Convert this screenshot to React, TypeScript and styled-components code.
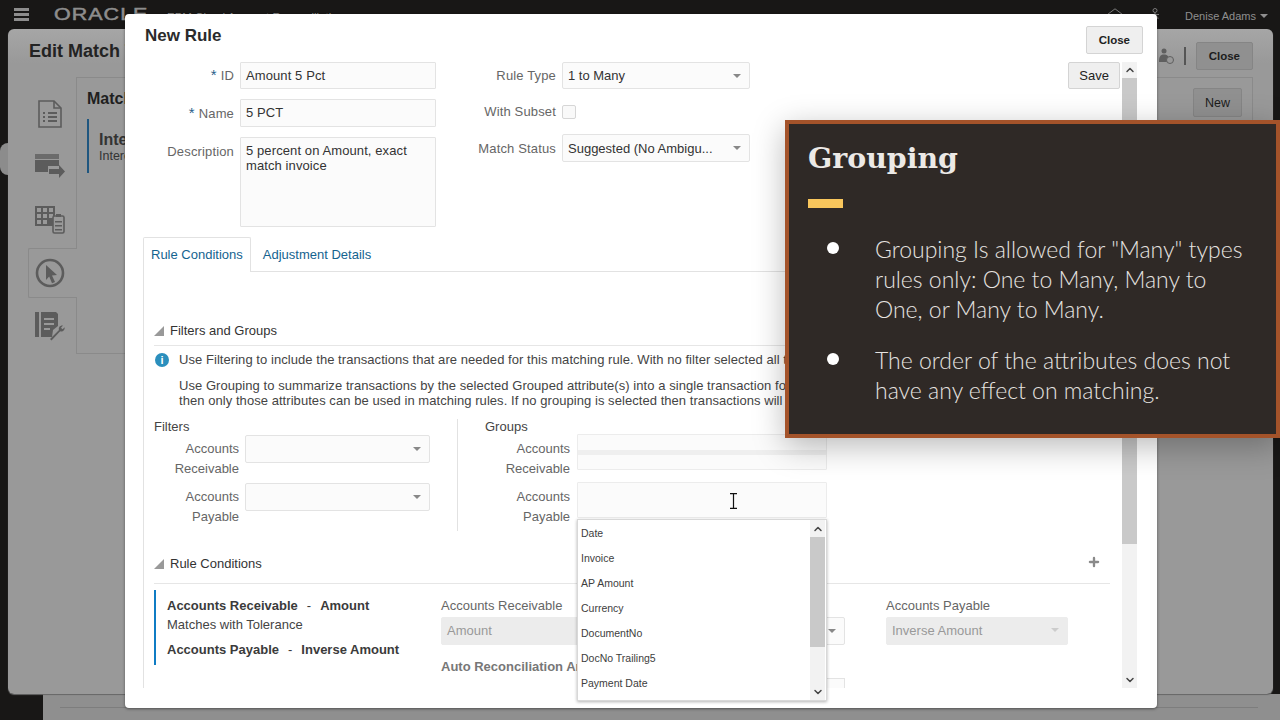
import React from 'react';
import styled, { createGlobalStyle } from 'styled-components';
import { ChevronDown, ChevronUp, Plus } from 'lucide-react';

const GlobalStyle = createGlobalStyle`
  html, body {
    margin: 0;
    padding: 0;
    background: #181716;
  }
  * {
    box-sizing: border-box;
  }
`;

const Screen = styled.div`
  position: relative;
  width: 1280px;
  height: 720px;
  overflow: hidden;
  background: #181716;
  font-family: 'Liberation Sans', Arial, sans-serif;
  font-size: 13px;
  color: #333;
`;

/* ---------- dimmed page behind the dialog ---------- */

const TopBar = styled.div`
  height: 29px;
  display: flex;
  align-items: center;
  padding: 0 12px 0 14px;
  color: #8d8d8d;
`;

const Burger = styled.div`
  width: 15px;
  height: 13px;
  border-top: 3px solid #8d8d8d;
  border-bottom: 3px solid #8d8d8d;
  display: flex;
  align-items: center;
  &::before {
    content: '';
    display: block;
    width: 100%;
    height: 3px;
    background: #8d8d8d;
  }
`;

const Logo = styled.div`
  margin-left: 25px;
  width: 113px;
  font-size: 16.5px;
  letter-spacing: 0.8px;
  -webkit-text-stroke: 0.5px #8d8d8d;
  transform: scaleX(1.3);
  transform-origin: left center;
`;

const AppName = styled.div`
  font-size: 11.5px;
  margin-top: 4px;
  white-space: nowrap;
`;

const UserArea = styled.div`
  margin-left: auto;
  display: flex;
  align-items: flex-start;
  height: 29px;
  padding-top: 8px;
`;

const HomeSlot = styled.div`
  margin-right: 27px;
  display: flex;
`;

const UserName = styled.div`
  font-size: 11px;
  margin: 2px 0 0 25px;
  display: flex;
  align-items: center;
  gap: 4px;
  color: #8f8f8f;
`;

const Caret = styled.span<{ $color?: string; $size?: number }>`
  display: block;
  width: 0;
  height: 0;
  border-left: ${(p) => p.$size ?? 4}px solid transparent;
  border-right: ${(p) => p.$size ?? 4}px solid transparent;
  border-top: ${(p) => p.$size ?? 4}px solid ${(p) => p.$color ?? '#888'};
`;

const Panel = styled.div`
  position: relative;
  margin: 0 7px 0 8px;
  height: 665px;
  border-radius: 6px;
  background: linear-gradient(#a6a6a6, #999 34px);
  box-shadow: 0 1px 1px #666;
`;

const PanelHead = styled.div`
  height: 48px;
  display: flex;
  align-items: center;
  padding: 0 20px 0 21px;
`;

const PanelTitle = styled.h1`
  margin: -4px 0 0;
  white-space: nowrap;
  font-size: 18px;
  color: #232323;
`;

const PanelActions = styled.div`
  margin: 5px 0 0 auto;
  display: flex;
  align-items: center;
  gap: 10px;
`;

const Separator = styled.div`
  width: 2px;
  height: 18px;
  background: #555;
`;

const DimButton = styled.div<{ $height?: number; $bold?: boolean }>`
  height: ${(p) => p.$height ?? 28}px;
  padding: 0 ${(p) => (p.$bold ? 12 : 11)}px;
  display: flex;
  align-items: center;
  border: 1px solid #858585;
  border-radius: 2px;
  background: #909090;
  color: #1c1c1c;
  font-size: ${(p) => (p.$bold ? 11.5 : 12.5)}px;
  font-weight: ${(p) => (p.$bold ? 'bold' : 'normal')};
`;

const PanelBody = styled.div`
  display: flex;
  padding-left: 20px;
`;

const SideTabs = styled.div`
  width: 48px;
  padding-top: 10px;
  display: flex;
  flex-direction: column;
`;

const SideTab = styled.div<{ $active?: boolean }>`
  position: relative;
  z-index: 1;
  height: ${(p) => (p.$active ? 50 : 53)}px;
  margin: ${(p) => (p.$active ? '2px -1px 1px 0' : '0')};
  padding-right: ${(p) => (p.$active ? 6 : 4)}px;
  display: flex;
  align-items: center;
  justify-content: center;
  color: #5c5c5c;
  background: ${(p) => (p.$active ? '#999' : 'transparent')};
  border: ${(p) => (p.$active ? '1px solid #8a8a8a' : 'none')};
  border-right: none;
  border-radius: 2px 0 0 2px;
`;

const ContentBox = styled.div`
  width: 1177px;
  height: 277px;
  padding: 10px 10px 0;
  border: 1px solid #8a8a8a;
`;

const ContentHead = styled.div`
  display: flex;
  align-items: flex-start;
  justify-content: space-between;
`;

const ContentTitle = styled.div`
  margin-top: 2px;
  white-space: nowrap;
  font-size: 16px;
  font-weight: bold;
  color: #1f1f1f;
`;

const MatchItem = styled.div`
  margin-top: 2px;
  padding: 12px 0 0 10px;
  height: 54px;
  white-space: nowrap;
  font-size: 12.5px;
  border-left: 2px solid #1f567f;
  color: #333;
`;

const MatchName = styled.div`
  font-size: 16px;
  font-weight: bold;
  line-height: 18px;
`;

const Handle = styled.div`
  position: absolute;
  left: -8px;
  top: 114px;
  width: 8px;
  height: 32px;
  border-radius: 16px 0 0 16px;
  background: #8c8c8c;
`;

const BottomStrip = styled.div`
  height: 26px;
  margin-left: 43px;
  padding: 13px 22px 0 17px;
  background: #8f8f8f;
  &::after {
    content: '';
    display: block;
    height: 1px;
    background: #7d7d7d;
  }
`;

/* ---------- dialog ---------- */

const Dialog = styled.div`
  position: absolute;
  left: 125px;
  top: 14px;
  width: 1032px;
  height: 694px;
  padding: 12px 0 0 18px;
  background: #fff;
  border-radius: 4px;
  box-shadow: 0 1px 3px rgba(0, 0, 0, 0.45);
`;

const DialogHead = styled.div`
  height: 36px;
  display: flex;
  align-items: flex-start;
  justify-content: space-between;
  padding-right: 14px;
`;

const DialogTitle = styled.h2`
  margin: 0 0 0 2px;
  font-size: 17px;
  line-height: 19px;
  color: #2b2b2b;
`;

const Button = styled.div<{ $bold?: boolean }>`
  height: ${(p) => (p.$bold ? 28 : 27)}px;
  padding: 0 ${(p) => (p.$bold ? 12 : 10)}px;
  display: flex;
  align-items: center;
  background: #efefef;
  border: 1px solid #d4d4d4;
  border-radius: 2px;
  font-size: ${(p) => (p.$bold ? 11.5 : 13)}px;
  font-weight: ${(p) => (p.$bold ? 'bold' : 'normal')};
  color: #222;
`;

const DialogBody = styled.div`
  display: flex;
  gap: 2px;
`;

const Main = styled.div`
  width: 977px;
`;

const TopForm = styled.div`
  height: 165px;
  display: flex;
  align-items: flex-start;
`;

const FormColumn = styled.div<{ $rows: string; $label: number; $field: number; $left?: number; $rowGap?: number }>`
  display: grid;
  grid-template-columns: ${(p) => p.$label}px ${(p) => p.$field}px;
  grid-template-rows: ${(p) => p.$rows};
  column-gap: 6px;
  row-gap: ${(p) => p.$rowGap ?? 0}px;
  margin-left: ${(p) => p.$left ?? 0}px;
`;

const FieldLabel = styled.label<{ $top?: boolean }>`
  align-self: ${(p) => (p.$top ? 'start' : 'center')};
  padding-top: ${(p) => (p.$top ? 7 : 0)}px;
  text-align: right;
  letter-spacing: 0.15px;
  color: #666;
  white-space: nowrap;
`;

const Required = styled.span`
  color: #2a5f8a;
  font-size: 15px;
  line-height: 10px;
  margin-right: 4px;
`;

const TextBox = styled.div`
  height: 100%;
  padding: 5px;
  background: #fbfbfb;
  border: 1px solid #e3e3e3;
  border-radius: 1px;
  letter-spacing: 0.1px;
  color: #333;
  line-height: 15px;
`;

const Select = styled.div<{ $disabled?: boolean; $height?: number }>`
  height: ${(p) => (p.$height ? `${p.$height}px` : '100%')};
  padding: 0 8px ${(p) => (p.$disabled ? 2 : 0)}px 5px;
  display: flex;
  align-items: center;
  justify-content: space-between;
  white-space: nowrap;
  background: ${(p) => (p.$disabled ? '#ececec' : '#fbfbfb')};
  border: 1px solid ${(p) => (p.$disabled ? '#ececec' : '#e3e3e3')};
  border-radius: 2px;
  color: ${(p) => (p.$disabled ? '#999' : '#333')};
`;

const CheckBox = styled.div`
  width: 14px;
  height: 14px;
  align-self: center;
  background: #f9f9f9;
  border: 1px solid #d6d6d6;
  border-radius: 2px;
`;

const SaveWrap = styled.div`
  margin-left: auto;
`;

const Tabs = styled.div`
  margin-top: 10px;
  height: 35px;
  display: flex;
  border-bottom: 1px solid #e2e2e2;
`;

const Tab = styled.div<{ $active?: boolean }>`
  height: ${(p) => (p.$active ? 35 : 34)}px;
  padding: 0 ${(p) => (p.$active ? 7 : 12)}px ${(p) => (p.$active ? 1 : 0)}px;
  display: flex;
  align-items: center;
  color: #14638f;
  background: #fff;
  border: ${(p) => (p.$active ? '1px solid #e2e2e2' : 'none')};
  border-bottom: none;
  border-radius: 2px 2px 0 0;
`;

const TabPanel = styled.div`
  height: 416px;
  padding: 51px 10px 0 10px;
  border-left: 1px solid #e2e2e2;
`;

const SectionHead = styled.div<{ $gap: number; $mt?: number }>`
  display: flex;
  align-items: center;
  height: ${(p) => p.$gap + 16}px;
  padding-bottom: ${(p) => p.$gap}px;
  margin-top: ${(p) => p.$mt ?? 0}px;
  border-bottom: 1px solid #e6e6e6;
  color: #333;
`;

const Corner = styled.span`
  width: 0;
  height: 0;
  margin-right: 6px;
  border-bottom: 10px solid #999;
  border-left: 10px solid transparent;
`;

const AddIcon = styled.span`
  margin: -4px 9px 0 auto;
  display: flex;
  color: #8a8a8a;
`;

const InfoRow = styled.div`
  margin-top: 5px;
  display: flex;
  gap: 10px;
  height: 17px;
  align-items: center;
  white-space: nowrap;
  letter-spacing: 0.055px;
  color: #444;
`;

const InfoDot = styled.span`
  width: 14px;
  height: 14px;
  margin-left: 1px;
  border-radius: 50%;
  background: #2b8fbd;
  color: #fff;
  font-size: 11px;
  font-weight: bold;
  line-height: 14px;
  text-align: center;
`;

const InfoText = styled.div`
  margin: 10px 0 0 25px;
  line-height: 15px;
  white-space: nowrap;
  letter-spacing: 0.055px;
  color: #444;
`;

const FilterGrid = styled.div`
  margin-top: 11px;
  height: 112px;
  display: grid;
  grid-template-columns: 303px 1fr;
`;

const GroupTitle = styled.div`
  height: 16px;
  line-height: 16px;
  color: #444;
`;

const GroupColumn = styled.div<{ $divided?: boolean }>`
  padding-left: ${(p) => (p.$divided ? 27 : 0)}px;
  border-left: ${(p) => (p.$divided ? '1px solid #e2e2e2' : 'none')};
`;

const PairRow = styled.div<{ $field: number; $gap: number }>`
  position: relative;
  height: 48px;
  display: grid;
  grid-template-columns: 85px ${(p) => p.$field}px;
  column-gap: ${(p) => p.$gap}px;
  align-items: start;
`;

const PairLabel = styled.div`
  padding-top: 4px;
  text-align: right;
  line-height: 20px;
  color: #666;
`;

const MultiSelect = styled.div<{ $striped?: boolean }>`
  height: 36px;
  margin-top: -1px;
  padding-top: 15px;
  background: #fbfbfb;
  border: 1px solid #ececec;
  border-radius: 1px;
  &::before {
    content: '';
    display: ${(p) => (p.$striped ? 'block' : 'none')};
    height: 5px;
    background: #efefef;
  }
`;

const ConditionRow = styled.div`
  margin-top: 6px;
  height: 98px;
  overflow: hidden;
  display: flex;
`;

const ConditionSummary = styled.div`
  width: 287px;
  height: 75px;
  flex-shrink: 0;
  padding: 7px 0 0 11px;
  border-left: 2px solid #0f7cc4;
`;

const SummaryLine = styled.div`
  display: flex;
  gap: 9px;
  height: 17px;
  align-items: center;
  font-weight: bold;
  white-space: nowrap;
  color: #3b3b3b;
`;

const SummaryDash = styled.span`
  font-weight: normal;
`;

const SummaryNote = styled.div`
  height: 27px;
  padding-top: 3px;
  line-height: 15px;
  color: #444;
`;

const ConditionFields = styled.div`
  display: grid;
  grid-template-columns: 182px 181px 182px;
  column-gap: 41px;
  align-content: start;
  padding-top: 8px;
`;

const ColumnLabel = styled.div`
  height: 19px;
  line-height: 15px;
  color: #666;
`;

const AutoTitle = styled.div`
  grid-column: 1;
  margin-top: 14px;
  font-weight: bold;
  white-space: nowrap;
  color: #777;
`;

const AutoField = styled.div`
  grid-column: 2;
  margin-top: 33px;
  height: 30px;
  background: #fbfbfb;
  border: 1px solid #e3e3e3;
`;

const Scrollbar = styled.div<{ $height: number; $thumb: number; $cap: number }>`
  width: 15px;
  height: ${(p) => p.$height}px;
  display: grid;
  grid-template-rows: ${(p) => p.$cap}px ${(p) => p.$thumb}px 1fr ${(p) => p.$cap}px;
  justify-items: center;
  background: #f2f2f2;
  color: #444;
`;

const ScrollCap = styled.div`
  width: 100%;
  display: flex;
  align-items: center;
  justify-content: center;
`;

const ScrollThumb = styled.div`
  width: 100%;
  background: #c9c9c9;
`;

const ListPopup = styled.div`
  position: absolute;
  z-index: 3;
  left: 92px;
  top: 36px;
  width: 250px;
  height: 182px;
  padding-right: 1px;
  display: flex;
  justify-content: space-between;
  background: #fff;
  border: 1px solid #d8d8d8;
  box-shadow: 0 1px 3px rgba(0, 0, 0, 0.3);
`;

const ListItems = styled.div`
  padding-left: 3px;
`;

const ListItem = styled.div`
  height: 25px;
  display: flex;
  align-items: center;
  font-size: 10.5px;
  color: #3d3d3d;
`;

const TextCursor = styled.svg`
  position: absolute;
  z-index: 4;
  left: 244px;
  top: 10px;
`;

/* ---------- training callout ---------- */

const Callout = styled.div`
  position: absolute;
  left: 785px;
  top: 120px;
  width: 495px;
  height: 318px;
  padding: 14px 30px 0 19px;
  background: #2f2926;
  border: 4px solid #a4532a;
  box-shadow: 0 8px 30px rgba(0, 0, 0, 0.28);
`;

const CalloutTitle = styled.h3`
  margin: 0;
  font-family: 'DejaVu Serif', 'Liberation Serif', serif;
  font-size: 28.4px;
  line-height: 40px;
  font-weight: bold;
  color: #ece9e6;
`;

const Accent = styled.div`
  width: 35px;
  height: 9px;
  margin-top: 21px;
  background: #f9c65c;
`;

const Bullets = styled.ul`
  margin: 26px 0 0;
  padding: 0;
  list-style: none;
  display: flex;
  flex-direction: column;
  gap: 21px;
`;

const Bullet = styled.li`
  padding-left: 67px;
  position: relative;
  font-family: Lato, 'Open Sans', sans-serif;
  font-weight: 300;
  font-size: 23px;
  line-height: 30px;
  color: #e6e3e0;
  &::before {
    content: '';
    position: absolute;
    left: 19px;
    top: 8px;
    width: 12px;
    height: 12px;
    border-radius: 50%;
    background: #fff;
  }
`;

const DocListIcon = () => (
  <svg width="24" height="28" viewBox="0 0 24 28" fill="none" stroke="currentColor" strokeWidth="1.6">
    <path d="M1 1h15l7 7v19H1z" />
    <path d="M16 1v7h7" />
    <path d="M5 13h2M5 17h2M5 21h2M10 13h9M10 17h9M10 21h9" strokeWidth="2" />
  </svg>
);

const WindowArrowIcon = () => (
  <svg width="30" height="26" viewBox="0 0 30 26" fill="currentColor">
    <path d="M0 0h24v5H0z" opacity="0.75" />
    <path d="M0 6h24v6H13v6H0z" />
    <path d="M14 15h10v-4l6 6.500-6 6.500v-4H14z" />
  </svg>
);

const GridClipIcon = () => (
  <svg width="30" height="28" viewBox="0 0 30 28" fill="currentColor">
    <path d="M0 0h20v20H0zM2 2v4h4V2zm6 0v4h4V2zm6 0v4h4V2zM2 8v4h4V8zm6 0v4h4V8zm6 0v4h4V8zM2 14v4h4v-4zm6 0v4h4v-4z" fillRule="evenodd" />
    <rect x="18" y="10" width="11" height="17" rx="1.500" fill="#999" stroke="currentColor" strokeWidth="1.600" />
    <path d="M21 8h5v3h-5zM20 15h7v1.500h-7zM20 19h7v1.500h-7zM20 23h7v1.500h-7z" />
  </svg>
);

const CursorCircleIcon = () => (
  <svg width="30" height="30" viewBox="0 0 30 30" fill="none">
    <circle cx="15" cy="15" r="13" stroke="currentColor" strokeWidth="2.600" />
    <path d="M11 7l11 10-5 .5 3 6.500-3 1.200-2.800-6.600L11 22z" fill="currentColor" />
  </svg>
);

const ListWrenchIcon = () => (
  <svg width="30" height="30" viewBox="0 0 30 30" fill="currentColor">
    <path d="M0 1h4v25H0z" />
    <path d="M6 1h15l2 2v12l-5 4-1 7H6zM9 7v2h10V7zm0 5v2h10v-2zm0 5v2h6v-2z" fillRule="evenodd" />
    <path d="M15 28l9-9c-.8-2.400 1-5 4-4.500l-2 2.200 1.500 1.500 2.200-2c.3 3-2 4.800-4.500 4l-8.700 9.300z" />
  </svg>
);

const TeamIcon = () => (
  <svg width="16" height="18" viewBox="0 0 16 18" fill="#5f5f5f">
    <circle cx="6" cy="4" r="2.500" />
    <path d="M1 15c0-5 1-7.500 5-7.500s5 2 5 7.500z" />
    <circle cx="12" cy="13" r="3.500" fill="#999" stroke="#5f5f5f" />
  </svg>
);

const HomeGlyph = () => (
  <svg width="16" height="7" viewBox="0 0 16 7" fill="none" stroke="#7a7a7a">
    <path d="M0.500 6.500 8 .8l7.500 5.700" />
  </svg>
);

const PersonGlyph = () => (
  <svg width="10" height="12" viewBox="0 0 10 12" fill="none" stroke="#7a7a7a">
    <circle cx="5" cy="2.500" r="2" />
    <path d="M5 5v6M1 6.500h8M2 11c0-2 1-3 3-3s3 1 3 3" />
  </svg>
);

const listItems = ['Date', 'Invoice', 'AP Amount', 'Currency', 'DocumentNo', 'DocNo Trailing5', 'Payment Date'];

const App = () => (
  <Screen>
    <GlobalStyle />
    <TopBar>
      <Burger />
      <Logo>ORACLE</Logo>
      <AppName>EPM Cloud Account Reconciliation</AppName>
      <UserArea>
        <HomeSlot><HomeGlyph /></HomeSlot>
        <PersonGlyph />
        <UserName>
          Denise Adams
          <Caret $color="#8f8f8f" />
        </UserName>
      </UserArea>
    </TopBar>

    <Panel>
      <Handle />
      <PanelHead>
        <PanelTitle>Edit Match Type</PanelTitle>
        <PanelActions>
          <TeamIcon />
          <Separator />
          <DimButton $bold>Close</DimButton>
        </PanelActions>
      </PanelHead>
      <PanelBody>
        <SideTabs>
          <SideTab><DocListIcon /></SideTab>
          <SideTab><WindowArrowIcon /></SideTab>
          <SideTab><GridClipIcon /></SideTab>
          <SideTab $active><CursorCircleIcon /></SideTab>
          <SideTab><ListWrenchIcon /></SideTab>
        </SideTabs>
        <ContentBox>
          <ContentHead>
            <ContentTitle>Match Rules</ContentTitle>
            <DimButton $height={29}>New</DimButton>
          </ContentHead>
          <MatchItem>
            <MatchName>Intercompany</MatchName>
            Intercompany rule
          </MatchItem>
        </ContentBox>
      </PanelBody>
    </Panel>
    <BottomStrip />

    <Dialog>
      <DialogHead>
        <DialogTitle>New Rule</DialogTitle>
        <Button $bold>Close</Button>
      </DialogHead>
      <DialogBody>
        <Main>
          <TopForm>
            <FormColumn $rows="27px 28px 90px" $label={91} $field={196} $rowGap={10}>
              <FieldLabel><Required>*</Required>ID</FieldLabel>
              <TextBox>Amount 5 Pct</TextBox>
              <FieldLabel><Required>*</Required>Name</FieldLabel>
              <TextBox>5 PCT</TextBox>
              <FieldLabel $top>Description</FieldLabel>
              <TextBox>5 percent on Amount, exact<br />match invoice</TextBox>
            </FormColumn>
            <FormColumn $rows="27px 45px 28px" $label={90} $field={188} $left={30}>
              <FieldLabel>Rule Type</FieldLabel>
              <Select>1 to Many<Caret /></Select>
              <FieldLabel>With Subset</FieldLabel>
              <CheckBox />
              <FieldLabel>Match Status</FieldLabel>
              <Select>Suggested (No Ambigu...<Caret /></Select>
            </FormColumn>
            <SaveWrap>
              <Button>Save</Button>
            </SaveWrap>
          </TopForm>

          <Tabs>
            <Tab $active>Rule Conditions</Tab>
            <Tab>Adjustment Details</Tab>
          </Tabs>

          <TabPanel>
            <SectionHead $gap={7}>
              <Corner />
              Filters and Groups
            </SectionHead>
            <InfoRow>
              <InfoDot>i</InfoDot>
              Use Filtering to include the transactions that are needed for this matching rule. With no filter selected all transactions are included.
            </InfoRow>
            <InfoText>
              Use Grouping to summarize transactions by the selected Grouped attribute(s) into a single transaction for matching. If grouping is selected
              <br />
              then only those attributes can be used in matching rules. If no grouping is selected then transactions will be matched individually.
            </InfoText>
            <FilterGrid>
              <GroupColumn>
                <GroupTitle>Filters</GroupTitle>
                <PairRow $field={185} $gap={6}>
                  <PairLabel>Accounts Receivable</PairLabel>
                  <Select $height={28}><span /><Caret /></Select>
                </PairRow>
                <PairRow $field={185} $gap={6}>
                  <PairLabel>Accounts Payable</PairLabel>
                  <Select $height={28}><span /><Caret /></Select>
                </PairRow>
              </GroupColumn>
              <GroupColumn $divided>
                <GroupTitle>Groups</GroupTitle>
                <PairRow $field={250} $gap={7}>
                  <PairLabel>Accounts Receivable</PairLabel>
                  <MultiSelect $striped />
                </PairRow>
                <PairRow $field={250} $gap={7}>
                  <PairLabel>Accounts Payable</PairLabel>
                  <MultiSelect />
                  <TextCursor width="9" height="16" viewBox="0 0 9 16" fill="none" stroke="#111" strokeWidth="1.200">
                    <path d="M1 .6h7M4.500.6v14.800M1 15.400h7" />
                  </TextCursor>
                  <ListPopup>
                    <ListItems>
                      {listItems.map((item) => (
                        <ListItem key={item}>{item}</ListItem>
                      ))}
                    </ListItems>
                    <Scrollbar $height={180} $thumb={110} $cap={17}>
                      <ScrollCap><ChevronUp size={12} strokeWidth={3} /></ScrollCap>
                      <ScrollThumb />
                      <span />
                      <ScrollCap><ChevronDown size={12} strokeWidth={3} /></ScrollCap>
                    </Scrollbar>
                  </ListPopup>
                </PairRow>
              </GroupColumn>
            </FilterGrid>

            <SectionHead $gap={12} $mt={25}>
              <Corner />
              Rule Conditions
              <AddIcon><Plus size={14} strokeWidth={4} /></AddIcon>
            </SectionHead>
            <ConditionRow>
              <ConditionSummary>
                <SummaryLine>
                  Accounts Receivable <SummaryDash>-</SummaryDash> Amount
                </SummaryLine>
                <SummaryNote>Matches with Tolerance</SummaryNote>
                <SummaryLine>
                  Accounts Payable <SummaryDash>-</SummaryDash> Inverse Amount
                </SummaryLine>
              </ConditionSummary>
              <ConditionFields>
                <ColumnLabel>Accounts Receivable</ColumnLabel>
                <ColumnLabel>Operator</ColumnLabel>
                <ColumnLabel>Accounts Payable</ColumnLabel>
                <Select $disabled $height={28}>Amount<Caret $color="#ccc" /></Select>
                <Select $height={28}>Matches with Tolerance<Caret /></Select>
                <Select $disabled $height={28}>Inverse Amount<Caret $color="#ccc" /></Select>
                <AutoTitle>Auto Reconciliation Amount</AutoTitle>
                <AutoField />
              </ConditionFields>
            </ConditionRow>
          </TabPanel>
        </Main>
        <Scrollbar $height={626} $thumb={466} $cap={16}>
          <ScrollCap><ChevronUp size={12} strokeWidth={3} /></ScrollCap>
          <ScrollThumb />
          <span />
          <ScrollCap><ChevronDown size={12} strokeWidth={3} /></ScrollCap>
        </Scrollbar>
      </DialogBody>
    </Dialog>

    <Callout>
      <CalloutTitle>Grouping</CalloutTitle>
      <Accent />
      <Bullets>
        <Bullet>Grouping Is allowed for "Many" types rules only: One to Many, Many to One, or Many to Many.</Bullet>
        <Bullet>The order of the attributes does not have any effect on matching.</Bullet>
      </Bullets>
    </Callout>
  </Screen>
);

export default App;
